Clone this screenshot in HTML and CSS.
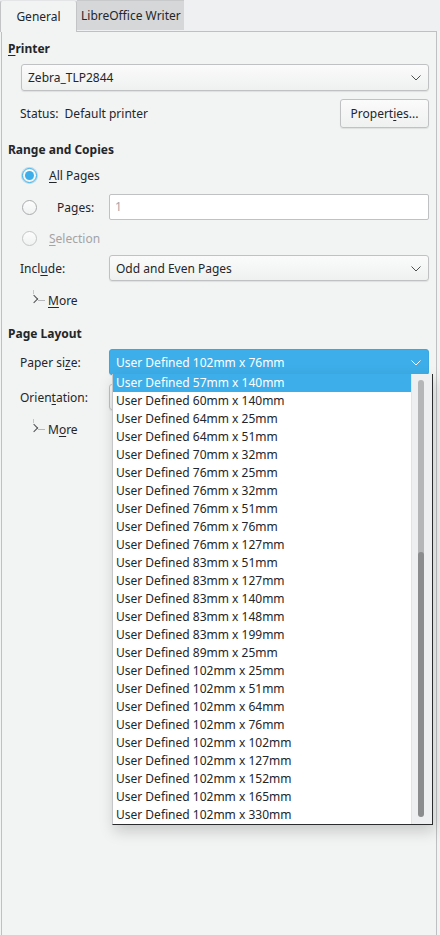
FILE: index.html
```html
<!DOCTYPE html>
<html lang="en">
<head>
  <meta charset="UTF-8" />
  <meta name="viewport" content="width=device-width, initial-scale=1.0"/>
  <title>Print</title>
  <link rel="stylesheet" href="styles.css">
</head>

<body>
  <div class="tabs">
    <div class="tab active">General</div>
    <div class="tab">LibreOffice Writer</div>
  </div>

  <div class="panel">
    <!-- printer -->
    <div class="heading"><u>P</u>rinter</div>
    <div class="combo printer-combo">
      <span>Zebra_TLP2844</span>
      <svg class="chev" width="10" height="6" viewBox="0 0 10 6"><path d="M0.5 0.5 L5 5 L9.5 0.5" fill="none" stroke="#4d4f51" stroke-width="1"/></svg>
    </div>
    <div class="status-row">
      <span class="status">Status:&nbsp; Default printer</span>
      <button class="btn">Propert<u>i</u>es...</button>
    </div>

    <!-- range and copies -->
    <div class="heading range-heading">Range and Copies</div>
    <div class="row radio-row first-radio">
      <span class="radio checked"></span>
      <span><u>A</u>ll Pages</span>
    </div>
    <div class="row radio-row pages-row">
      <span class="radio"></span>
      <span class="pages-label">Pa<u>g</u>es:</span>
      <div class="input">1</div>
    </div>
    <div class="row radio-row disabled">
      <span class="radio"></span>
      <span><u>S</u>election</span>
    </div>
    <div class="row field-row include-row">
      <span class="label">Incl<u>u</u>de:</span>
      <div class="combo">
        <span>Odd and Even Pages</span>
        <svg class="chev" width="10" height="6" viewBox="0 0 10 6"><path d="M0.5 0.5 L5 5 L9.5 0.5" fill="none" stroke="#4d4f51" stroke-width="1"/></svg>
      </div>
    </div>
    <div class="row expander">
      <span class="twig"><span class="stub"></span></span>
      <span><u>M</u>ore</span>
    </div>

    <!-- page layout -->
    <div class="heading layout-heading">Page Layout</div>
    <div class="row field-row paper-row">
      <span class="label">Paper si<u>z</u>e:</span>
      <div class="combo focused">
        <span>User Defined 102mm x 76mm</span>
        <svg class="chev" width="10" height="6" viewBox="0 0 10 6"><path d="M0.5 0.5 L5 5 L9.5 0.5" fill="none" stroke="#ffffff" stroke-width="1"/></svg>
      </div>
    </div>
    <div class="row field-row orient-row">
      <span class="label">Orien<u>t</u>ation:</span>
      <div class="combo"></div>
    </div>
    <div class="row expander">
      <span class="twig"><span class="stub"></span></span>
      <span>M<u>o</u>re</span>
    </div>
  </div>

  <!-- open paper size list -->
  <div class="popup">
    <ul class="list" id="paperList"></ul>
    <div class="scrollbar">
      <div class="groove"></div>
      <div class="thumb"></div>
    </div>
  </div>

  <script>
    const sizes = [
      "57mm x 140mm", "60mm x 140mm", "64mm x 25mm", "64mm x 51mm", "70mm x 32mm",
      "76mm x 25mm", "76mm x 32mm", "76mm x 51mm", "76mm x 76mm", "76mm x 127mm",
      "83mm x 51mm", "83mm x 127mm", "83mm x 140mm", "83mm x 148mm", "83mm x 199mm",
      "89mm x 25mm", "102mm x 25mm", "102mm x 51mm", "102mm x 64mm", "102mm x 76mm",
      "102mm x 102mm", "102mm x 127mm", "102mm x 152mm", "102mm x 165mm", "102mm x 330mm"
    ];
    const list = document.getElementById("paperList");
    sizes.forEach((size, i) => {
      const li = document.createElement("li");
      li.textContent = "User Defined " + size;
      if (i === 0) li.classList.add("selected");
      list.appendChild(li);
    });
  </script>
</body>
</html>
```

FILE: styles.css
```css
body {
  margin: 0;
  background: #f2f3f3;
  font-family: 'Noto Sans', sans-serif;
  font-size: 12px;
  color: #232629;
  height: 935px;
  overflow: hidden;
}

u {
  text-decoration-thickness: 1px;
  text-underline-offset: 2px;
}

/* tab strip */
.tabs {
  display: flex;
  height: 31px;
  background: #eff0f1;
}

.tab {
  height: 30px;
  display: flex;
  align-items: center;
  background: #d6d7d8;
  box-sizing: border-box;
  border-top: 1px solid #c8c9ca;
  white-space: nowrap;
}

.tab.active {
  height: 32px;
  width: 77px;
  justify-content: center;
  background: #f2f3f3;
  border: 1px solid #c3c4c5;
  border-bottom: none;
  border-top-color: #e4e5e6;
  border-radius: 3px 3px 0 0;
  position: relative;
  z-index: 1;
}

.tab:not(.active) {
  width: 107px;
  padding-left: 4px;
}

/* page body */
.panel {
  margin-left: 1px;
  width: 436px;
  height: 910px;
  box-sizing: border-box;
  border: 1px solid #bfc0c1;
  padding: 6px 7px 0 6px;
}

.heading {
  height: 20px;
  line-height: 22px;
  font-weight: 700;
}

.range-heading {
  margin-top: 11px;
}

.layout-heading {
  margin-top: 13px;
}

.combo {
  display: flex;
  align-items: center;
  justify-content: space-between;
  height: 27px;
  box-sizing: border-box;
  border: 1px solid #c0c1c2;
  border-radius: 3px;
  background: linear-gradient(#fbfbfb, #eff0f0);
  padding: 0 7px 0 6px;
  box-shadow: 0 1px 1px rgba(0, 0, 0, 0.08);
}

.combo .chev {
  margin-top: 1px;
}

.combo.focused {
  background: #3daee9;
  border-color: #3aa7e0;
  color: #ffffff;
}

.printer-combo {
  margin: 6px 0 0 13px;
}

.status-row {
  margin: 8px 0 0 12px;
  height: 29px;
  display: flex;
  align-items: center;
  justify-content: space-between;
}

.btn {
  height: 29px;
  width: 89px;
  font: inherit;
  color: inherit;
  border: 1px solid #c0c1c2;
  border-radius: 3px;
  background: linear-gradient(#fbfbfb, #eff0f0);
  box-shadow: 0 1px 1px rgba(0, 0, 0, 0.08);
  padding: 0;
}

/* form rows */
.row {
  display: flex;
  align-items: center;
}

.radio-row {
  height: 20px;
  margin-top: 8px;
  padding-left: 14px;
}

.first-radio {
  margin-top: 6px;
}

.radio {
  width: 15px;
  height: 15px;
  box-sizing: border-box;
  border: 1px solid #a9abad;
  border-radius: 50%;
  background: linear-gradient(#fdfdfd, #f0f1f1);
  margin-right: 12px;
  flex: none;
  position: relative;
}

.radio.checked {
  border-color: #3daee9;
  box-shadow: 0 0 0 1px rgba(61, 174, 233, 0.35);
}

.radio.checked::after {
  content: "";
  position: absolute;
  left: 2px;
  top: 2px;
  width: 9px;
  height: 9px;
  border-radius: 50%;
  background: #3daee9;
}

.pages-row {
  height: 26px;
  margin-top: 9px;
}

.pages-label {
  width: 60px;
  padding-left: 8px;
  box-sizing: border-box;
  flex: none;
}

.input {
  flex: 1;
  height: 26px;
  box-sizing: border-box;
  border: 1px solid #c0c1c2;
  border-radius: 2px;
  background: #ffffff;
  color: #a3a5a7;
  padding-left: 5px;
  line-height: 24px;
}

.disabled {
  color: #a2a4a6;
}

.disabled .radio {
  border-color: #c3c5c6;
}

.field-row {
  height: 26px;
  margin-top: 9px;
  padding-left: 12px;
}

.field-row .label {
  width: 89px;
  flex: none;
}

.field-row .combo {
  flex: 1;
  height: 26px;
}

.include-row {
  margin-top: 7px;
}

.paper-row {
  margin-top: 6px;
}

/* the "More" expanders */
.expander {
  height: 20px;
  margin-top: 9px;
  padding-left: 22px;
}

.twig {
  width: 18px;
  height: 20px;
  position: relative;
  flex: none;
}

.twig::before {
  content: "";
  position: absolute;
  left: 2px;
  top: 1px;
  width: 5px;
  height: 5px;
  border-top: 1px solid #4d4f51;
  border-right: 1px solid #4d4f51;
  transform: translate(-1px, 5px) rotate(45deg);
}

.twig::after {
  content: "";
  position: absolute;
  left: 8px;
  top: 10px;
  width: 7px;
  border-top: 1px solid #b6b7b8;
}

.twig .stub {
  position: absolute;
  left: 3px;
  top: 0;
  height: 4px;
  border-left: 1px solid #c4c5c6;
}

/* open drop-down list */
.popup {
  position: absolute;
  left: 112px;
  top: 374px;
  width: 321px;
  height: 451px;
  box-sizing: border-box;
  background: #ffffff;
  border-left: 1px solid #c6c7c8;
  border-right: 1px solid #2b2c2d;
  border-bottom: 1px solid #2b2c2d;
  box-shadow: 2px 6px 14px rgba(0, 0, 0, 0.18);
  display: flex;
}

.list {
  list-style: none;
  margin: 0;
  padding: 0;
  width: 298px;
}

.list li {
  height: 18px;
  line-height: 18px;
  padding-left: 3px;
  white-space: nowrap;
}

.list li.selected {
  background: #3daee9;
  color: #ffffff;
}

.scrollbar {
  flex: 1;
  background: #eeeff0;
  border-left: 1px solid #e2e3e4;
  position: relative;
}

.groove {
  position: absolute;
  left: 6px;
  top: 6px;
  width: 6px;
  height: 178px;
  border-radius: 3px;
  background: #b5b6b7;
}

.thumb {
  position: absolute;
  left: 6px;
  top: 178px;
  width: 6px;
  height: 265px;
  border-radius: 3px;
  background: #8b8c8d;
}
```
